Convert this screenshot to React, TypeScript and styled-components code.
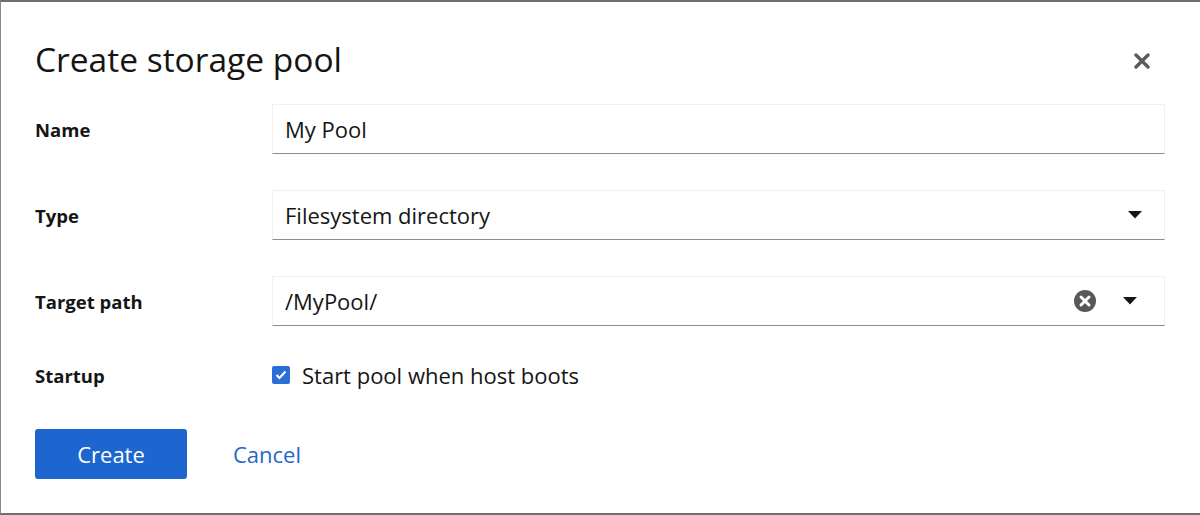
import React from "react";
import styled, { createGlobalStyle } from "styled-components";

const Global = createGlobalStyle`
  html, body { margin: 0; padding: 0; background: #ffffff; }
  body { font-family: "Open Sans", "Liberation Sans", sans-serif; color: #151515; }
  * { box-sizing: border-box; }
`;

const Frame = styled.div`
  width: 1200px;
  height: 515px;
  background: #ffffff;
  border-top: 2px solid #6e6e6e;
  border-left: 1px solid #8a8a8a;
  border-bottom: 2px solid #6e6e6e;
  padding: 0 35px 0 34px;
  display: flex;
  flex-direction: column;
  overflow: hidden;
`;

const Header = styled.div`
  display: flex;
  justify-content: space-between;
  align-items: flex-start;
  padding-top: 36px;
  height: 102px;
`;

const Title = styled.h1`
  margin: 0;
  font-family: "Open Sans", "Liberation Sans", sans-serif;
  font-weight: 500;
  font-size: 33.5px;
  line-height: 42px;
  color: #151515;
`;

const CloseButton = styled.button`
  border: 0;
  background: transparent;
  padding: 0;
  width: 16px;
  height: 16px;
  margin-top: 15px;
  margin-right: 15px;
  display: flex;
  align-items: center;
  justify-content: center;
  cursor: pointer;
`;

const Form = styled.div`
  display: grid;
  grid-template-columns: 237px 1fr;
  row-gap: 36px;
  align-items: center;
`;

const Label = styled.div`
  font-family: "Open Sans", "Liberation Sans", sans-serif;
  font-weight: 700;
  font-size: 18.5px;
  color: #151515;
`;

const Field = styled.div<{ $padRight?: number }>`
  height: 50px;
  display: flex;
  align-items: center;
  border: 1px solid #f0f0f0;
  border-bottom: 1px solid #8a8d90;
  padding: 0 ${(p) => p.$padRight ?? 22}px 1px 12px;
  font-size: 22px;
  color: #151515;
`;

const FieldText = styled.span`
  flex: 1;
`;

const Check = styled.div`
  height: 26px;
  display: flex;
  align-items: center;
  gap: 12px;
  font-size: 22px;
  color: #151515;
`;

const Box = styled.span`
  width: 18px;
  height: 18px;
  border-radius: 2px;
  background: #2b6fd6;
  display: flex;
  align-items: center;
  justify-content: center;
`;

const Footer = styled.div`
  display: flex;
  align-items: center;
  gap: 46px;
  margin-top: 41px;
`;

const Primary = styled.button`
  width: 152px;
  height: 50px;
  border: 0;
  border-radius: 3px;
  background: #1d66cf;
  color: #ffffff;
  font-family: "Open Sans", "Liberation Sans", sans-serif;
  font-size: 22px;
`;

const LinkButton = styled.button`
  border: 0;
  background: transparent;
  padding: 0;
  color: #1f66cc;
  font-family: "Open Sans", "Liberation Sans", sans-serif;
  font-size: 22px;
`;

const CaretSvg = styled.svg<{ $ml?: number }>`
  margin-left: ${(p) => p.$ml ?? 0}px;
  flex: none;
`;

const Caret = ({ ml = 0 }: { ml?: number }) => (
  <CaretSvg $ml={ml} width="14" height="8" viewBox="0 0 14 8">
    <path d="M0 0 L14 0 L7 7.5 Z" fill="#151515" />
  </CaretSvg>
);

const ClearIcon = () => (
  <svg width="22" height="22" viewBox="0 0 22 22">
    <circle cx="11" cy="11" r="11" fill="#585858" />
    <path d="M7 7 L15 15 M15 7 L7 15" stroke="#fff" strokeWidth="3" strokeLinecap="round" />
  </svg>
);

export default function App() {
  return (
    <>
      <Global />
      <Frame>
        <Header>
          <Title>Create storage pool</Title>
          <CloseButton aria-label="Close">
            <svg width="16" height="16" viewBox="0 0 16 16">
              <path d="M2 2 L14 14 M14 2 L2 14" stroke="#5b5b5b" strokeWidth="3.4" strokeLinecap="round" />
            </svg>
          </CloseButton>
        </Header>
        <Form>
          <Label>Name</Label>
          <Field>
            <FieldText>My Pool</FieldText>
          </Field>
          <Label>Type</Label>
          <Field>
            <FieldText>Filesystem directory</FieldText>
            <Caret />
          </Field>
          <Label>Target path</Label>
          <Field $padRight={27}>
            <FieldText>/MyPool/</FieldText>
            <ClearIcon />
            <Caret ml={27} />
          </Field>
          <Label>Startup</Label>
          <Check>
            <Box>
              <svg width="12" height="10" viewBox="0 0 12 10">
                <path d="M1.5 5 L4.5 8 L10.5 1.5" stroke="#fff" strokeWidth="2.2" fill="none" />
              </svg>
            </Box>
            Start pool when host boots
          </Check>
        </Form>
        <Footer>
          <Primary>Create</Primary>
          <LinkButton>Cancel</LinkButton>
        </Footer>
      </Frame>
    </>
  );
}
